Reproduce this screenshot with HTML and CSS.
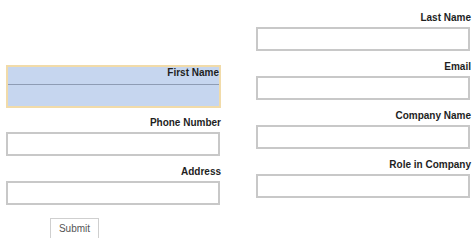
FILE: index.html
```html
<!DOCTYPE html>
<html lang="en">
<head>
  <meta charset="UTF-8">
  <title>Contact Form</title>
  <link rel="stylesheet" href="styles.css">
</head>
<body>

  <!-- Contact form, two columns -->
  <form id="contactForm" class="form">

    <div class="column column-left">
      <!-- First Name is shown with the inspector highlight over it -->
      <div class="field-hl">
        <div class="field-hl-inner">
          <label for="firstName">First Name</label>
          <input type="text" id="firstName" name="firstName">
        </div>
      </div>
      <div class="field field-phone">
        <label for="phone">Phone Number</label>
        <input type="text" id="phone" name="phone">
      </div>
      <div class="field">
        <label for="address">Address</label>
        <input type="text" id="address" name="address">
      </div>
      <button type="button" id="submitBtn">Submit</button>
    </div>

    <div class="column column-right">
      <div class="field">
        <label for="lastName">Last Name</label>
        <input type="text" id="lastName" name="lastName">
      </div>
      <div class="field">
        <label for="email">Email</label>
        <input type="text" id="email" name="email">
      </div>
      <div class="field">
        <label for="company">Company Name</label>
        <input type="text" id="company" name="company">
      </div>
      <div class="field">
        <label for="role">Role in Company</label>
        <input type="text" id="role" name="role">
      </div>
    </div>

  </form>

</body>
</html>
```

FILE: styles.css
```css
body {
  font-family: "Liberation Sans", Arial, sans-serif;
  margin: 0;
  background-color: #fff;
  overflow: hidden;
}
.form {
  display: flex;
  gap: 35px;
  padding-left: 6px;
}
.column {
  width: 215px;
  display: flex;
  flex-direction: column;
}
.column-left {
  padding-top: 65px;
}
.column-right {
  padding-top: 10px;
}
label {
  display: block;
  text-align: right;
  font-size: 10px;
  font-weight: bold;
  line-height: 16px;
  color: #1e1e1e;
  margin-bottom: 1px;
}
.field {
  margin-bottom: 8px;
}
.field-phone {
  margin-top: 7px;
}
input[type="text"] {
  display: block;
  box-sizing: border-box;
  width: 214px;
  height: 24px;
  margin: 0;
  padding: 0 4px;
  border: 2px solid #c8c8c8;
  background: #fff;
}
/* Inspector hover highlight */
.field-hl {
  background-color: #f1dba9;
  padding: 2px;
}
.field-hl-inner {
  background-color: #c6d6ef;
  height: 39px;
}
.field-hl-inner label {
  line-height: 12px;
  margin-bottom: 5px;
}
.field-hl-inner input[type="text"] {
  width: 100%;
  height: 22px;
  border: none;
  border-top: 1px solid #8e9cb4;
  background: transparent;
}
#submitBtn {
  align-self: flex-start;
  margin-left: 44px;
  margin-top: 5px;
  width: 49px;
  height: 26px;
  padding: 0 0 6px;
  font-family: "Liberation Sans", Arial, sans-serif;
  font-size: 10px;
  color: #555;
  background: #fff;
  border: 1px solid #cfcfcf;
  cursor: pointer;
}
```
